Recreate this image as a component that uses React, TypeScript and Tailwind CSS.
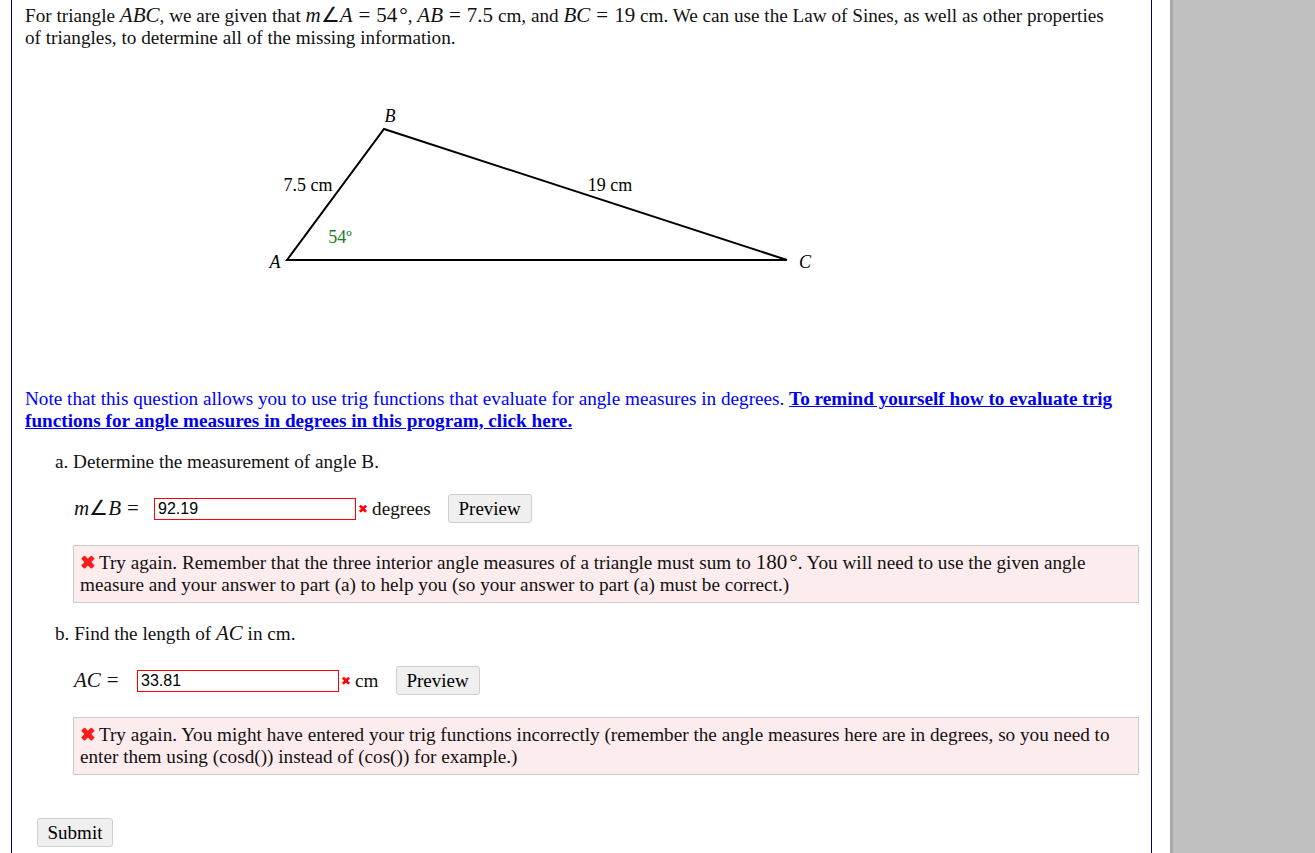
const serif = "font-['Liberation_Serif',serif]"

function M({ children }: { children: React.ReactNode }) {
  return <span className="text-[21px] leading-none">{children}</span>
}

function Var({ children }: { children: React.ReactNode }) {
  return <span className="italic">{children}</span>
}

function Eq() {
  return <span className="mx-[6px]">=</span>
}

function Deg() {
  return <span className="ml-[2px]">°</span>
}

function XMark() {
  return (
    <span className="mr-[4px] font-['DejaVu_Sans',sans-serif] text-[12px] text-[#ff0000]">✖</span>
  )
}

function BigX() {
  return (
    <span className="mr-[3px] font-['DejaVu_Sans',sans-serif] text-[19px] leading-[0] text-[#ff1a1a] [text-shadow:0_0_1px_#800000]">
      ✖
    </span>
  )
}

function PreviewButton() {
  return (
    <button className="h-[29px] w-[84px] rounded-[3px] border border-[#cfcfcf] bg-[#efefef] text-[19px] leading-[22px] text-black">
      Preview
    </button>
  )
}

function AnswerRow({
  label,
  value,
  unit,
  labelWidth,
}: {
  label: React.ReactNode
  value: string
  unit: string
  labelWidth: string
}) {
  return (
    <div className="ml-[49px] flex h-[29px] items-center">
      <div className={labelWidth}>{label}</div>
      <input
        readOnly
        value={value}
        className="h-[22px] w-[202px] border border-[#ff0000] px-[3px] font-['Liberation_Sans',sans-serif] text-[16px] text-black outline-none"
      />
      <span className="ml-[2px] flex items-center">
        <XMark />
        <span>{unit}</span>
      </span>
      <div className="ml-[17px]">
        <PreviewButton />
      </div>
    </div>
  )
}

function Feedback({ children }: { children: React.ReactNode }) {
  return (
    <div className="ml-[48px] w-[1066px] border border-[#cccccc] bg-[#fdeced] px-[6px] py-[6px] leading-[22px]">
      {children}
    </div>
  )
}

export default function App() {
  return (
    <div className={`${serif} flex h-[853px] overflow-hidden bg-white text-[19.2px] leading-[22px] text-[#111]`}>
      <div className="w-[1170px] shrink-0">
        <div className="ml-[11px] h-full w-[1141px] border-x border-[#00008b] px-[13px] pt-[5px]">
          <p className="max-w-[1090px]">
            For triangle{" "}
            <M>
              <Var>ABC</Var>
            </M>
            , we are given that{" "}
            <M>
              <Var>m</Var>∠<Var>A</Var>
              <Eq />
              54
              <Deg />
            </M>
            ,{" "}
            <M>
              <Var>AB</Var>
              <Eq />
              7.5
            </M>{" "}
            cm, and{" "}
            <M>
              <Var>BC</Var>
              <Eq />
              19
            </M>{" "}
            cm. We can use the Law of Sines, as well as other properties of triangles, to determine all of the
            missing information.
          </p>

          <svg width="1115" height="339" className="block" viewBox="0 0 1115 339">
            <polygon points="262,211 359,80 762,211" fill="none" stroke="#000" strokeWidth="2" strokeLinejoin="miter" />
            <g fontFamily="'Liberation Serif', serif" fontSize="18">
              <text x="365" y="73" textAnchor="middle" fontStyle="italic">B</text>
              <text x="250" y="219" textAnchor="middle" fontStyle="italic">A</text>
              <text x="780" y="219" textAnchor="middle" fontStyle="italic">C</text>
              <text x="283" y="142" textAnchor="middle">7.5 cm</text>
              <text x="585" y="142" textAnchor="middle">19 cm</text>
              <text x="315" y="194" textAnchor="middle" fill="#1e7b1e">54º</text>
            </g>
          </svg>

          <p className="text-[#0000ff]">
            Note that this question allows you to use trig functions that evaluate for angle measures in degrees.{" "}
            <a href="#" className="font-bold text-[#0000ee] underline">
              To remind yourself how to evaluate trig functions for angle measures in degrees in this program, click
              here.
            </a>
          </p>

          <div className="mt-[19px] ml-[30px]">a. Determine the measurement of angle B.</div>
          <div className="mt-[21px]">
            <AnswerRow
              label={
                <M>
                  <Var>m</Var>∠<Var>B</Var>
                  <Eq />
                </M>
              }
              value="92.19"
              unit="degrees"
              labelWidth="w-[80px]"
            />
          </div>
          <div className="mt-[22px]">
            <Feedback>
              <BigX />
              Try again. Remember that the three interior angle measures of a triangle must sum to{" "}
              <M>
                180
                <Deg />
              </M>
              . You will need to use the given angle measure and your answer to part (a) to help you (so your answer
              to part (a) must be correct.)
            </Feedback>
          </div>

          <div className="mt-[20px] ml-[30px]">
            b. Find the length of{" "}
            <M>
              <Var>AC</Var>
            </M>{" "}
            in cm.
          </div>
          <div className="mt-[21px]">
            <AnswerRow
              label={
                <M>
                  <Var>AC</Var>
                  <Eq />
                </M>
              }
              value="33.81"
              unit="cm"
              labelWidth="w-[63px]"
            />
          </div>
          <div className="mt-[22px]">
            <Feedback>
              <BigX />
              Try again. You might have entered your trig functions incorrectly (remember the angle measures here are
              in degrees, so you need to enter them using (cosd()) instead of (cos()) for example.)
            </Feedback>
          </div>

          <div className="mt-[43px] ml-[12px]">
            <button className="h-[29px] w-[76px] rounded-[3px] border border-[#cfcfcf] bg-[#efefef] text-[19px] leading-[22px] text-black">
              Submit
            </button>
          </div>
        </div>
      </div>
      <div className="flex-1 border-l-[3px] border-[#a8a8a8] bg-[#c0c0c0]" />
    </div>
  )
}
